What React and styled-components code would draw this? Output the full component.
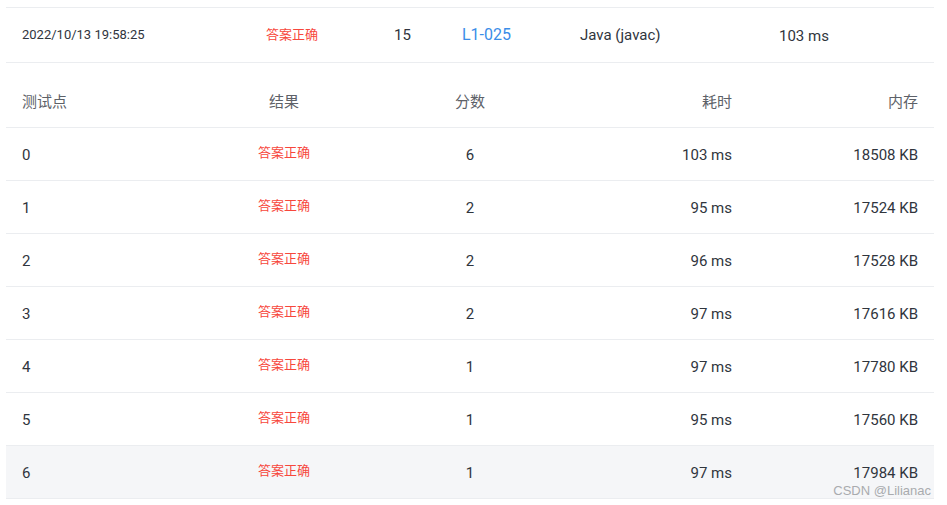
import styled, { createGlobalStyle } from 'styled-components';

const GlobalStyle = createGlobalStyle`
  body {
    margin: 0;
    background: #fff;
    font-family: Roboto, "Noto Sans CJK SC", sans-serif;
  }
`;

const colors = {
  text: '#30353d',
  head: '#5d6168',
  red: '#f7473c',
  blue: '#3a8de8',
  line: '#ebedf0',
  hover: '#f5f6f8',
};

const Page = styled.div`
  position: relative;
  width: 928px;
  padding: 7px 0 0 6px;
`;

const Summary = styled.div`
  display: grid;
  grid-template-columns: 244px 128px 68px 118px 199px 1fr;
  align-items: center;
  height: 54px;
  padding-left: 16px;
  border-top: 1px solid ${colors.line};
  border-bottom: 1px solid ${colors.line};
  color: ${colors.text};
  font-size: 15px;
`;

const SummaryCell = styled.span`
  font-size: ${(p) => p.$size || 15}px;
  color: ${(p) => p.$color || colors.text};
  margin-top: ${(p) => p.$shift || 0}px;
`;

const Table = styled.div`
  display: flex;
  flex-direction: column;
`;

const Row = styled.div`
  display: grid;
  grid-template-columns: 168px 188px 184px 170px 186px;
  align-items: center;
  box-sizing: border-box;
  height: ${(p) => (p.$head ? 65 : 53)}px;
  padding: ${(p) => (p.$head ? '10px 16px 0' : '0 16px')};
  border-bottom: 1px solid ${colors.line};
  background: ${(p) => (p.$active ? colors.hover : '#fff')};
  color: ${(p) => (p.$head ? colors.head : colors.text)};
  font-size: 15px;
`;

const Cell = styled.span`
  text-align: ${(p) => p.$align || 'left'};
  color: ${(p) => p.$color || 'inherit'};
  font-size: ${(p) => p.$size || 15}px;
  margin-top: ${(p) => p.$shift || 0}px;
`;

const Watermark = styled.span`
  position: absolute;
  right: 3px;
  bottom: 1px;
  font-family: "Liberation Sans", Arial, sans-serif;
  font-size: 13px;
  color: #a9abae;
`;

const cases = [
  ['0', '6', '103 ms', '18508 KB'],
  ['1', '2', '95 ms', '17524 KB'],
  ['2', '2', '96 ms', '17528 KB'],
  ['3', '2', '97 ms', '17616 KB'],
  ['4', '1', '97 ms', '17780 KB'],
  ['5', '1', '95 ms', '17560 KB'],
  ['6', '1', '97 ms', '17984 KB'],
];

export default function App() {
  return (
    <Page>
      <GlobalStyle />
      <Summary>
        <SummaryCell $size={13} $shift={-2}>2022/10/13 19:58:25</SummaryCell>
        <SummaryCell $size={13} $color={colors.red} $shift={-4}>答案正确</SummaryCell>
        <SummaryCell>15</SummaryCell>
        <SummaryCell $size={16} $color={colors.blue} $shift={-2}>L1-025</SummaryCell>
        <SummaryCell>Java (javac)</SummaryCell>
        <SummaryCell $shift={2}>103 ms</SummaryCell>
      </Summary>
      <Table>
        <Row $head>
          <Cell>测试点</Cell>
          <Cell $align="center">结果</Cell>
          <Cell $align="center">分数</Cell>
          <Cell $align="right">耗时</Cell>
          <Cell $align="right">内存</Cell>
        </Row>
        {cases.map(([id, score, time, mem]) => (
          <Row key={id} $active={id === '6'}>
            <Cell $shift={2}>{id}</Cell>
            <Cell $align="center" $color={colors.red} $size={13} $shift={-6}>
              答案正确
            </Cell>
            <Cell $align="center" $shift={2}>{score}</Cell>
            <Cell $align="right" $shift={2}>{time}</Cell>
            <Cell $align="right" $shift={2}>{mem}</Cell>
          </Row>
        ))}
      </Table>
      <Watermark>CSDN @Lilianac</Watermark>
    </Page>
  );
}
